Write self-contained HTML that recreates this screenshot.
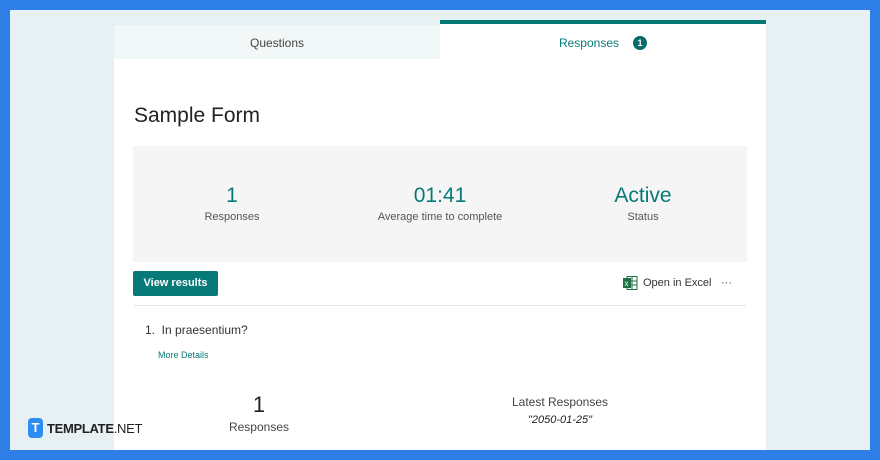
<!DOCTYPE html>
<html><head><style>
*{margin:0;padding:0;box-sizing:border-box}
body{width:880px;height:460px;background:#2d7ee6;position:relative;overflow:hidden;font-family:"Liberation Sans",sans-serif;color:#333}
.inner{position:absolute;left:10px;top:10px;width:860px;height:440px;background:#e7f0f3}
.card{position:absolute;left:114px;top:59px;width:652px;height:391px;background:#fff}
.tabq{position:absolute;left:114px;top:25px;width:326px;height:34px;background:#f2f7f7;font-size:12px;text-align:center;line-height:36px;color:#444}
.tabr{position:absolute;left:440px;top:20px;width:326px;height:39px;background:#fff;border-top:4px solid #077a78;font-size:12px;text-align:center;line-height:38px;color:#077a78}
.badge{display:inline-block;width:14px;height:14px;border-radius:7px;background:#0a6b6b;color:#fff;font-size:9px;line-height:14px;margin-left:14px;vertical-align:1px;font-weight:bold}
.abs{position:absolute}
.stats{position:absolute;left:133px;top:146px;width:614px;height:116px;background:#f5f5f5}
.big{font-size:21px;color:#077a78;text-align:center}
.lab{font-size:11px;color:#555;text-align:center}
.btn{position:absolute;left:133px;top:271px;width:85px;height:25px;background:#077a78;color:#fff;font-size:11px;font-weight:bold;text-align:center;line-height:25px;border-radius:2px}
</style></head><body>
<div class="inner"></div>
<div class="card"></div>
<div class="tabq">Questions</div>
<div class="tabr">Responses<span class="badge">1</span></div>
<div class="abs" style="left:134px;top:104px;font-size:21px;color:#222">Sample Form</div>
<div class="stats">
 <div class="abs" style="left:49px;top:38px;width:100px"><div class="big">1</div><div class="lab" style="margin-top:3px">Responses</div></div>
 <div class="abs" style="left:222px;top:38px;width:170px"><div class="big">01:41</div><div class="lab" style="margin-top:3px">Average time to complete</div></div>
 <div class="abs" style="left:450px;top:38px;width:120px"><div class="big">Active</div><div class="lab" style="margin-top:3px">Status</div></div>
</div>
<div class="btn">View results</div>
<svg class="abs" style="left:623px;top:276px" width="15" height="14"><rect x="4" y="0.5" width="10" height="13" fill="#fff" stroke="#1e7145"/><line x1="4" y1="5" x2="14" y2="5" stroke="#1e7145"/><line x1="4" y1="9" x2="14" y2="9" stroke="#1e7145"/><line x1="9" y1="0" x2="9" y2="14" stroke="#1e7145"/><rect x="0" y="2" width="8" height="10" fill="#1e7145"/><text x="1.5" y="10" font-size="8" fill="#fff" font-family="Liberation Sans">x</text></svg>
<div class="abs" style="left:643px;top:277px;font-size:11px;color:#333">Open in Excel</div>
<div class="abs" style="left:721px;top:277px;font-size:11px;color:#555">···</div>
<div class="abs" style="left:134px;top:305px;width:612px;height:1px;background:#e6e6e6"></div>
<div class="abs" style="left:145px;top:323px;font-size:12px;color:#333">1.&nbsp; In praesentium?</div>
<div class="abs" style="left:158px;top:350px;font-size:9px;color:#077a78">More Details</div>
<div class="abs" style="left:209px;top:392px;width:100px;text-align:center;font-size:22px;color:#222">1</div>
<div class="abs" style="left:209px;top:420px;width:100px;text-align:center;font-size:12px;color:#444">Responses</div>
<div class="abs" style="left:500px;top:395px;width:120px;text-align:center;font-size:12px;color:#444">Latest Responses</div>
<div class="abs" style="left:500px;top:414px;width:120px;text-align:center;font-size:11px;color:#222;font-style:italic">"2050-01-25"</div>
<div class="abs" style="left:28px;top:418px;width:15px;height:20px;background:#2d8cf0;border-radius:4px;color:#fff;font-weight:bold;font-size:13px;text-align:center;line-height:20px">T</div>
<div class="abs" style="left:47px;top:421px;font-size:13px;color:#222;letter-spacing:-0.3px"><b>TEMPLATE</b>.NET</div>
</body></html>
